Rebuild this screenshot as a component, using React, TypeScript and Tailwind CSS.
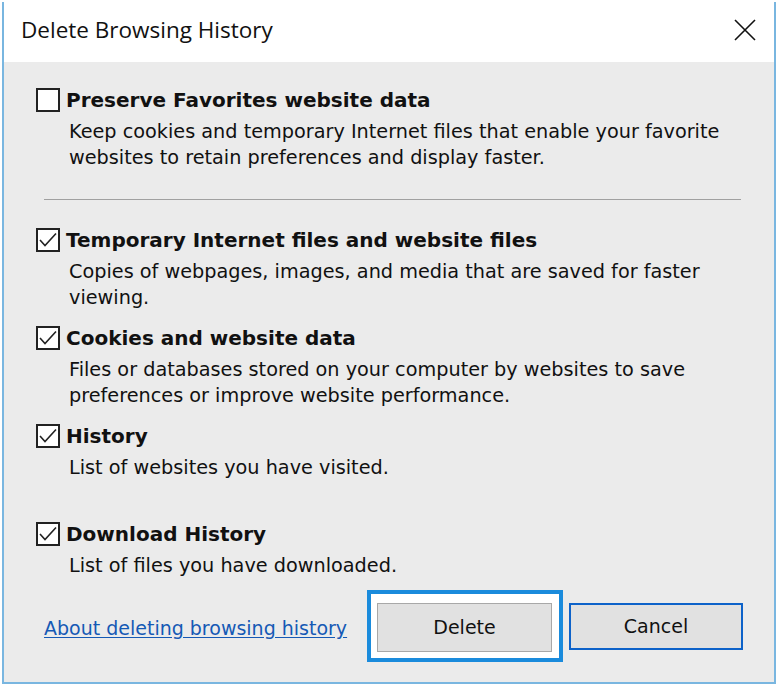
import React from "react";

const items = [
  {
    checked: false,
    title: "Preserve Favorites website data",
    lines: [
      "Keep cookies and temporary Internet files that enable your favorite",
      "websites to retain preferences and display faster.",
    ],
  },
  {
    checked: true,
    title: "Temporary Internet files and website files",
    lines: [
      "Copies of webpages, images, and media that are saved for faster",
      "viewing.",
    ],
  },
  {
    checked: true,
    title: "Cookies and website data",
    lines: [
      "Files or databases stored on your computer by websites to save",
      "preferences or improve website performance.",
    ],
  },
  {
    checked: true,
    title: "History",
    lines: ["List of websites you have visited.", ""],
  },
  {
    checked: true,
    title: "Download History",
    lines: ["List of files you have downloaded."],
  },
];

function Checkbox({ checked }: { checked: boolean }) {
  return (
    <div className="w-[24px] h-[24px] border-2 border-[#222] bg-white flex items-center justify-center shrink-0">
      {checked && (
        <svg width="20" height="20" viewBox="0 0 20 20">
          <path d="M2 10 L7 15.5 L18 3.5" fill="none" stroke="#222" strokeWidth="1.6" />
        </svg>
      )}
    </div>
  );
}

function Option({ item }: { item: (typeof items)[number] }) {
  return (
    <div>
      <div className="flex items-center h-[24px]">
        <Checkbox checked={item.checked} />
        <span className="ml-[6px] text-[20px] font-bold text-[#111]">{item.title}</span>
      </div>
      <div className="mt-[7px] ml-[33px] text-[19.25px] leading-[26px] text-[#111]">
        {item.lines.map((l, i) => (
          <div key={i} className="h-[26px]">
            {l}
          </div>
        ))}
      </div>
    </div>
  );
}

export default function App() {
  return (
    <div className="w-[778px] h-[686px] bg-white p-[2px]" style={{ fontFamily: '"DejaVu Sans", sans-serif' }}>
      <div className="w-full h-full flex flex-col border-x-2 border-b-2 border-[#79b6e0] bg-[#ebebeb]">
        {/* title bar */}
        <div className="h-[60px] bg-white flex items-center justify-between pl-[17px] pr-[18px] shrink-0">
          <span className="text-[22.5px] text-[#111] pb-[4px]" style={{ fontFamily: '"Open Sans", sans-serif' }}>
            Delete Browsing History
          </span>
          <svg width="22" height="22" viewBox="0 0 22 22" className="mb-[4px]">
            <path d="M1 1 L21 21 M21 1 L1 21" stroke="#111" strokeWidth="1.6" />
          </svg>
        </div>

        <div className="pl-[32px] pt-[26px]">
          <Option item={items[0]} />
          <div className="mt-[28px] mb-[28px] ml-[8px] mr-[33px] h-px bg-[#a0a0a0]" />
          <div className="flex flex-col gap-[15px]">
            {items.slice(1).map((it) => (
              <Option key={it.title} item={it} />
            ))}
          </div>
        </div>

        {/* footer */}
        <div className="flex items-center mt-[11px] pl-[40px] pr-[31px]">
          <a className="text-[19px] text-[#1559b5] underline underline-offset-2 w-[323px] pt-[5px]">
            About deleting browsing history
          </a>
          <div className="w-[196px] h-[72px] border-[4px] border-[#1a8bdc] bg-white pt-[9px] pb-[6px] pl-[6px] pr-[7px]">
            <div className="w-full h-full bg-[#e1e1e1] border border-[#a8a8a8] flex items-center justify-center text-[19px] text-[#111]">
              Delete
            </div>
          </div>
          <div className="ml-[6px] w-[174px] h-[47px] bg-[#e1e1e1] border-2 border-[#0d62c9] flex items-center justify-center text-[19px] text-[#111]">
            Cancel
          </div>
        </div>
      </div>
    </div>
  );
}
